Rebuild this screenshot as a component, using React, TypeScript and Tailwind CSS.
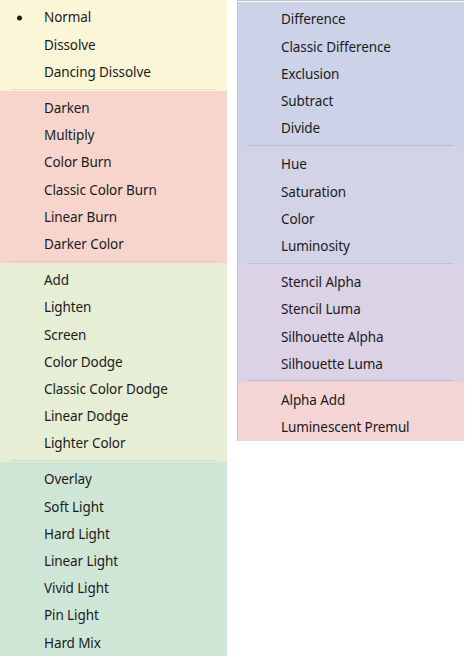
type Section = { bg: string; line: string; items: string[] };

const left: Section[] = [
  { bg: "bg-[#faf6d7]", line: "bg-[#e6e2c6]", items: ["Normal", "Dissolve", "Dancing Dissolve"] },
  {
    bg: "bg-[#f7d5cc]",
    line: "bg-[#e6c6be]",
    items: ["Darken", "Multiply", "Color Burn", "Classic Color Burn", "Linear Burn", "Darker Color"],
  },
  {
    bg: "bg-[#e6eed6]",
    line: "bg-[#d3dbc4]",
    items: ["Add", "Lighten", "Screen", "Color Dodge", "Classic Color Dodge", "Linear Dodge", "Lighter Color"],
  },
  {
    bg: "bg-[#cfe6d6]",
    line: "bg-[#bcd3c3]",
    items: ["Overlay", "Soft Light", "Hard Light", "Linear Light", "Vivid Light", "Pin Light", "Hard Mix"],
  },
];

const right: Section[] = [
  {
    bg: "bg-[#ccd3e8]",
    line: "bg-[#b8bfd4]",
    items: ["Difference", "Classic Difference", "Exclusion", "Subtract", "Divide"],
  },
  { bg: "bg-[#d2d3e7]", line: "bg-[#bebfd3]", items: ["Hue", "Saturation", "Color", "Luminosity"] },
  {
    bg: "bg-[#dbd2e5]",
    line: "bg-[#c7bfd1]",
    items: ["Stencil Alpha", "Stencil Luma", "Silhouette Alpha", "Silhouette Luma"],
  },
  { bg: "bg-[#f5d4d6]", line: "bg-[#e0c1c3]", items: ["Alpha Add", "Luminescent Premul"] },
];

function Menu({ sections, className, indent }: { sections: Section[]; className: string; indent: string }) {
  return (
    <div className={`flex w-[227px] flex-col ${className}`}>
      {sections.map((s, si) => {
        const last = si === sections.length - 1;
        return (
          <div key={si} className={`${s.bg} flex flex-col pt-1 ${last ? "" : "pb-px"}`}>
            {s.items.map((item) => (
              <div
                key={item}
                className={`relative flex h-[27.2px] items-center ${indent} text-[13.5px] tracking-[-0.1px] text-[#1b1b1b]`}
              >
                {item === "Normal" && (
                  <span className="absolute left-[17px] top-1/2 h-[5px] w-[5px] -translate-y-1/2 rounded-full bg-[#1b1b1b]" />
                )}
                {item}
              </div>
            ))}
            {!last && <div className={`mx-[10px] mt-[3px] h-px ${s.line}`} />}
          </div>
        );
      })}
    </div>
  );
}

export default function App() {
  return (
    <div
      className="flex min-h-[661px] w-[474px] items-start gap-[10px] bg-white"
      style={{ fontFamily: '"Noto Sans", "Open Sans", sans-serif' }}
    >
      <Menu sections={left} className="rounded-tr-[3px]" indent="pl-[44px]" />
      <Menu sections={right} className="border-t border-l border-[#bcc3d8] pt-px" indent="pl-[43px]" />
    </div>
  );
}
